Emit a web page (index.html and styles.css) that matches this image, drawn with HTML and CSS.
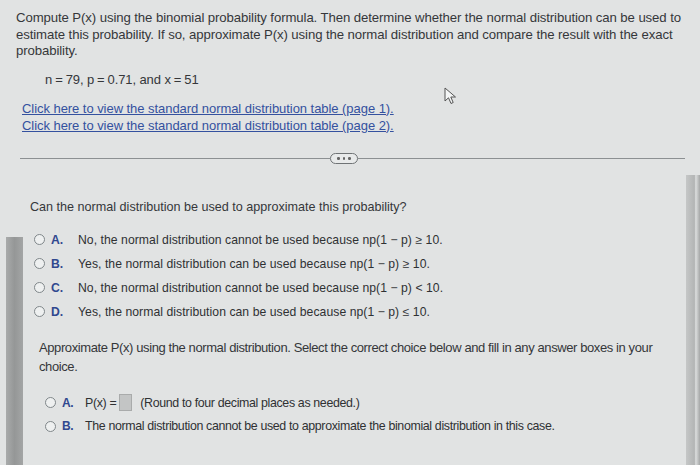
FILE: index.html
```html
<!DOCTYPE html>
<html>
<head>
<meta charset="utf-8">
<link rel="stylesheet" href="styles.css">
</head>
<body>
<div class="page">
  <section class="intro">
    <p class="prompt">Compute P(x) using the binomial probability formula. Then determine whether the normal distribution can be used to estimate this probability. If so, approximate P(x) using the normal distribution and compare the result with the exact probability.</p>
    <p class="given">n<span class="eq">=</span>79, p<span class="eq">=</span>0.71, and x<span class="eq">=</span>51</p>
    <div class="links">
      <a href="#">Click here to view the standard normal distribution table (page 1).</a>
      <a href="#">Click here to view the standard normal distribution table (page 2).</a>
    </div>
  </section>
  <div class="divider">
    <span class="rule rule-left"></span>
    <span class="pill"><i></i><i></i><i></i></span>
    <span class="rule rule-right"></span>
  </div>
  <div class="lower">
    <div class="gutter-left"><div class="bar"></div></div>
    <div class="content">
      <p class="question">Can the normal distribution be used to approximate this probability?</p>
      <ul class="options">
        <li><span class="radio"></span><b>A.</b><span>No, the normal distribution cannot be used because np(1 − p) ≥ 10.</span></li>
        <li><span class="radio"></span><b>B.</b><span>Yes, the normal distribution can be used because np(1 − p) ≥ 10.</span></li>
        <li><span class="radio"></span><b>C.</b><span>No, the normal distribution cannot be used because np(1 − p) &lt; 10.</span></li>
        <li><span class="radio"></span><b>D.</b><span>Yes, the normal distribution can be used because np(1 − p) ≤ 10.</span></li>
      </ul>
      <p class="question2">Approximate P(x) using the normal distribution. Select the correct choice below and fill in any answer boxes in your choice.</p>
      <ul class="options2">
        <li><span class="radio"></span><b>A.</b><span class="px">P(x) =</span><span class="box"></span><span>(Round to four decimal places as needed.)</span></li>
        <li><span class="radio"></span><b>B.</b><span>The normal distribution cannot be used to approximate the binomial distribution in this case.</span></li>
      </ul>
    </div>
    <div class="gutter-right"></div>
  </div>
  <svg class="cursor" width="14" height="18" viewBox="0 0 14 18">
    <path d="M1 1 L1 14 L4.5 10.8 L7 16.5 L9.2 15.5 L6.8 10 L11.5 10 Z" fill="#f4f6f6" stroke="#555" stroke-width="1" stroke-linejoin="round"/>
  </svg>
</div>
</body>
</html>
```
FILE: styles.css
```css
* { box-sizing: border-box; }
html, body { margin: 0; padding: 0; }
body {
  width: 700px;
  height: 465px;
  overflow: hidden;
  background: #e1e3e3;
  font-family: "Liberation Sans", Arial, sans-serif;
  color: #35373a;
}
.page {
  position: relative;
  width: 700px;
  height: 465px;
  display: flex;
  flex-direction: column;
}
p { margin: 0; }
.intro {
  padding: 10px 10px 0 16px;
}
.prompt {
  font-size: 13.2px;
  line-height: 16.5px;
  letter-spacing: -0.1px;
}
.given {
  margin: 12px 0 0 29px;
  font-size: 13px;
  line-height: 16px;
  letter-spacing: -0.1px;
}
.eq { margin: 0 3px; }
.links {
  display: flex;
  flex-direction: column;
  margin: 12px 0 0 6px;
}
.links a {
  color: #34519f;
  font-size: 13px;
  line-height: 17px;
  text-decoration: underline;
  letter-spacing: -0.05px;
}
.divider {
  display: flex;
  align-items: center;
  margin: 19px 15px 0 20px;
  height: 12px;
}
.rule {
  height: 1.5px;
  background: #8c9092;
}
.rule-left { flex: 310; }
.rule-right { flex: 327; }
.pill {
  display: flex;
  align-items: center;
  justify-content: center;
  gap: 3px;
  width: 28px;
  height: 11px;
  border: 1.2px solid #6f7375;
  border-radius: 6px;
  background: #e8eaea;
}
.pill i {
  width: 2.5px;
  height: 2.5px;
  background: #666;
  border-radius: 50%;
}
.lower {
  flex: 1;
  display: flex;
  margin-top: 10px;
}
.gutter-left {
  width: 28px;
  display: flex;
  flex-direction: column;
  padding: 62px 5px 0 6px;
}
.bar {
  flex: 1;
  background: linear-gradient(90deg, #a9abab, #959797 50%, #a3a5a5);
}
.content {
  flex: 1;
  padding-top: 24px;
}
.gutter-right {
  width: 14px;
  background: linear-gradient(90deg, #c5c7c7, #b3b5b5 60%, #dcdede 70%, #a4a6a6);
}
.question {
  margin-left: 2px;
  font-size: 12.6px;
  line-height: 16px;
}
.options, .options2 {
  list-style: none;
  margin: 0;
  padding: 0;
}
.options {
  margin: 17px 0 0 6px;
  display: flex;
  flex-direction: column;
  gap: 8px;
}
.options li, .options2 li {
  display: flex;
  align-items: center;
  height: 16px;
  font-size: 12.2px;
  color: #2f3133;
}
.options li span:last-child { letter-spacing: 0.05px; }
.radio {
  width: 11px;
  height: 11px;
  border: 1.3px solid #80878a;
  border-radius: 50%;
  background: #eef0f0;
  margin-right: 6px;
  flex-shrink: 0;
}
.options b, .options2 b {
  color: #30488f;
  width: 27px;
  font-weight: bold;
}
.question2 {
  margin: 18px 0 0 11px;
  font-size: 13px;
  line-height: 19px;
  letter-spacing: -0.4px;
  padding-right: 24px;
}
.options2 {
  margin: 19px 0 0 17px;
  display: flex;
  flex-direction: column;
  gap: 7.5px;
}
.options2 li {
  font-size: 12.4px;
  letter-spacing: -0.35px;
}
.options2 b { width: 23px; font-size: 12px; }
.px { margin-right: 3px; }
.box {
  width: 13px;
  height: 17px;
  background: #c3c5c5;
  border: 1px solid #a9abab;
  margin-right: 8px;
}
.cursor {
  position: absolute;
  left: 444px;
  top: 87px;
}
```
